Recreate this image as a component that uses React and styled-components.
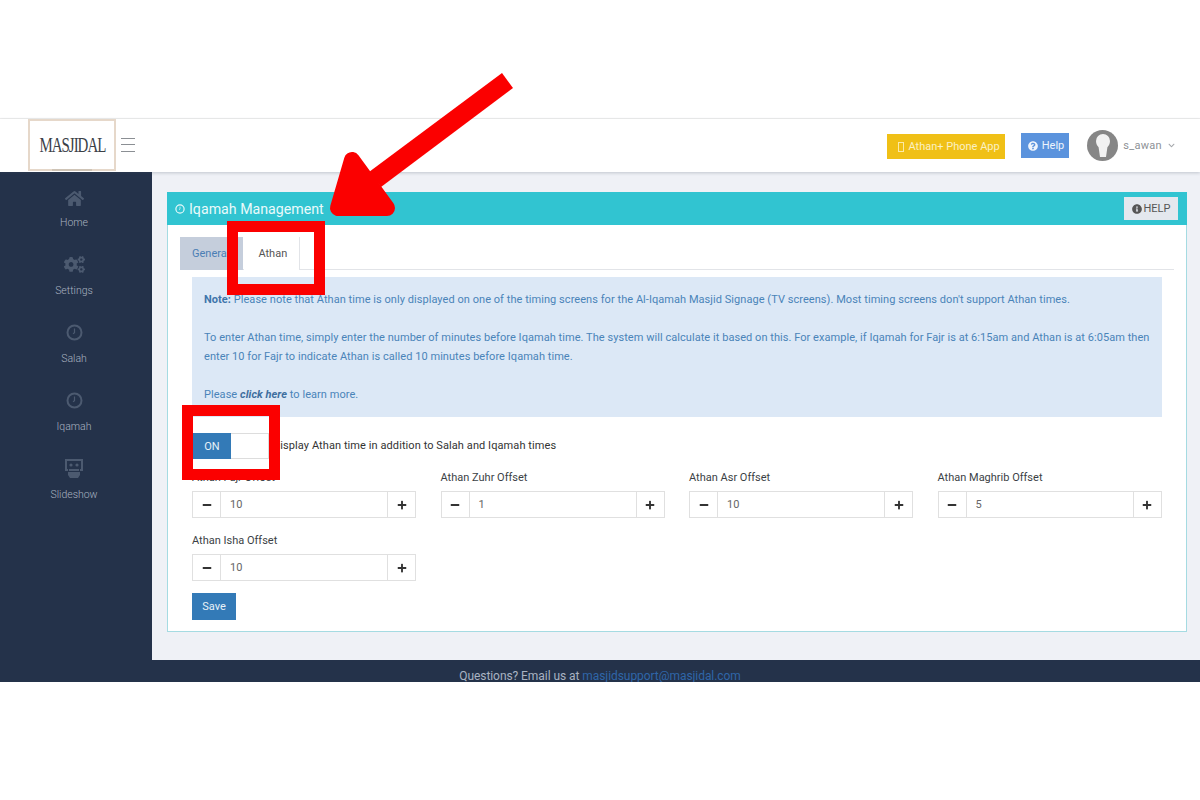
import styled, { createGlobalStyle } from "styled-components";
import { FaHome, FaCogs, FaMinus, FaPlus, FaInfoCircle, FaQuestionCircle, FaChevronDown } from "react-icons/fa";

const GlobalStyle = createGlobalStyle`
  html, body { margin: 0; padding: 0; background: #fff; }
  body { font-family: Roboto, "Liberation Sans", sans-serif; }
`;

const Page = styled.div`
  position: relative;
  width: 1200px;
  height: 800px;
  overflow: hidden;
  padding-top: 118px;
  box-sizing: border-box;
`;

const Frame = styled.div`
  height: 564px;
  display: flex;
  flex-direction: column;
  border-top: 1px solid #efefef;
  box-sizing: border-box;
`;

const Header = styled.header`
  height: 53px;
  flex: none;
  display: flex;
  align-items: center;
  padding: 0 25px 0 28px;
  background: #fff;
  position: relative;
  z-index: 1;
  box-shadow: 0 1px 3px rgba(60, 70, 90, 0.25);
`;

const Logo = styled.div`
  width: 88px;
  height: 52px;
  box-sizing: border-box;
  border: 2px solid #e6d8ca;
  display: flex;
  align-items: center;
  justify-content: center;
  position: relative;
  top: -1px;
  &::after {
    content: "";
    position: absolute;
    left: 22px;
    right: 22px;
    bottom: -2px;
    height: 2px;
    background: #cfc4b6;
  }
`;

const LogoText = styled.span`
  font-family: "Liberation Serif", serif;
  font-size: 22px;
  letter-spacing: -1.5px;
  color: #3a4047;
  transform: scaleX(0.68);
  white-space: nowrap;
`;

const Burger = styled.div`
  width: 14px;
  height: 12px;
  margin-left: 5px;
  margin-top: -1px;
  border-top: 1px solid #8b8f94;
  border-bottom: 1px solid #8b8f94;
  position: relative;
  &::after {
    content: "";
    position: absolute;
    left: 0;
    right: 0;
    top: 5px;
    border-top: 1px solid #8b8f94;
  }
`;

const HeaderRight = styled.div`
  margin-left: auto;
  display: flex;
  align-items: center;
`;

const TopButton = styled.div`
  height: 25px;
  box-sizing: border-box;
  display: flex;
  align-items: center;
  gap: 4px;
  padding: 0 5px 0 ${(p) => p.$left}px;
  margin-right: ${(p) => p.$right}px;
  margin-top: ${(p) => p.$drop}px;
  background: ${(p) => p.$bg};
  color: ${(p) => p.$fg};
  font-size: 11px;
  white-space: nowrap;
`;

const PhoneGlyph = styled.span`
  width: 4px;
  height: 8px;
  border: 1px solid #fbeaa8;
`;

const Avatar = styled.div`
  width: 31px;
  height: 31px;
  border-radius: 50%;
  background: #868686;
  display: flex;
  align-items: center;
  justify-content: center;
`;

const UserName = styled.span`
  margin-left: 5px;
  font-size: 11px;
  letter-spacing: 0.3px;
  color: #8d9196;
`;

const Caret = styled.span`
  margin-left: 6px;
  display: flex;
  color: #a5a8ac;
  font-size: 7px;
`;

const Main = styled.div`
  flex: 1;
  display: flex;
  min-height: 0;
`;

const Sidebar = styled.nav`
  width: 152px;
  flex: none;
  background: #24324a;
  padding: 12px 4px 0 0;
  box-sizing: border-box;
`;

const NavItem = styled.div`
  height: 68px;
  display: flex;
  flex-direction: column;
  align-items: center;
  color: #a9b2c0;
  font-size: 10.5px;
  font-weight: 300;
`;

const NavIcon = styled.div`
  height: 24px;
  margin-top: ${(p) => p.$drop || 0}px;
  margin-bottom: ${(p) => 8 - (p.$drop || 0)}px;
  display: flex;
  align-items: center;
  justify-content: center;
  color: #4c5a70;
  font-size: ${(p) => p.$size || 19}px;
`;

const Content = styled.main`
  flex: 1;
  background: #eff1f6;
  padding: 20px 13px 0 15px;
`;

const Panel = styled.section`
  height: 440px;
  box-sizing: border-box;
  background: #fff;
  border: 1px solid #a5dbe2;
`;

const PanelHead = styled.div`
  height: 33px;
  margin: -1px -1px 0;
  background: #31c4d1;
  display: flex;
  align-items: center;
  justify-content: space-between;
  padding: 0 9px 0 8px;
  color: #eafafb;
  font-size: 14.2px;
`;

const PanelTitle = styled.div`
  display: flex;
  align-items: center;
  gap: 4px;
`;

const HelpButton = styled.div`
  width: 54px;
  height: 23px;
  display: flex;
  align-items: center;
  justify-content: center;
  gap: 2px;
  background: #e4e8ee;
  color: #555;
  font-size: 11px;
`;

const Tabs = styled.div`
  margin: 12px 12px 0;
  height: 33px;
  box-sizing: border-box;
  display: flex;
  border-bottom: 1px solid #e2e4e8;
`;

const Tab = styled.div`
  height: 33px;
  flex: none;
  box-sizing: border-box;
  display: flex;
  align-items: center;
  padding: 0 ${(p) => (p.$active ? "12px" : "13px")} 0 ${(p) => (p.$active ? "14px" : "12px")};
  font-size: 11px;
  color: ${(p) => (p.$active ? "#555" : "#4b7fb5")};
  background: ${(p) => (p.$active ? "#fff" : "#c5cedc")};
  border-right: 1px solid ${(p) => (p.$active ? "#e2e4e8" : "transparent")};
  margin-right: 1px;
`;

const TabBody = styled.div`
  padding: 7px 24px 0;
`;

const Note = styled.div`
  height: 140px;
  box-sizing: border-box;
  padding: 13px 12px 0;
  background: #dce8f6;
  color: #4a84b9;
  font-size: 11px;
  line-height: 19px;
  letter-spacing: 0.05px;
  p { margin: 0 0 19px; }
  strong { font-weight: 700; color: #3f75ab; }
  em { font-style: italic; font-weight: 700; color: #3f6f9f; }
`;

const ToggleRow = styled.div`
  margin-top: 16px;
  display: flex;
  align-items: center;
  gap: 4px;
  color: #333;
  font-size: 11px;
  letter-spacing: 0.08px;
`;

const ToggleLabel = styled.span`
  margin-top: -2px;
`;

const Toggle = styled.div`
  width: 76px;
  height: 26px;
  margin-left: 1px;
  box-sizing: border-box;
  border: 1px solid #ddd;
  border-left: 0;
  background: #fff;
  display: flex;
  position: relative;
`;

const ToggleOn = styled.div`
  width: 38px;
  margin: -1px 0;
  background: #337ab7;
  color: #e8f1f8;
  display: flex;
  align-items: center;
  justify-content: center;
  font-size: 11px;
`;

const FieldGrid = styled.div`
  margin-top: 12px;
  display: grid;
  grid-template-columns: repeat(4, 224px);
  column-gap: 24.5px;
  row-gap: 16px;
`;

const Field = styled.div`
  color: #3b3f45;
  font-size: 11px;
`;

const FieldLabel = styled.div`
  height: 14px;
  line-height: 14px;
  margin-bottom: 6px;
`;

const Stepper = styled.div`
  height: 27px;
  box-sizing: border-box;
  display: flex;
  border: 1px solid #e0e0e0;
`;

const StepButton = styled.div`
  width: 27px;
  flex: none;
  display: flex;
  align-items: center;
  justify-content: center;
  color: #333;
  font-size: 10px;
`;

const StepValue = styled.div`
  flex: 1;
  display: flex;
  align-items: center;
  padding-left: 9px;
  border-left: 1px solid #e0e0e0;
  border-right: 1px solid #e0e0e0;
  color: #666;
  font-size: 11px;
`;

const SaveButton = styled.div`
  width: 44px;
  height: 27px;
  margin-top: 12px;
  display: flex;
  align-items: center;
  justify-content: center;
  background: #337ab7;
  color: #e8f1f8;
  font-size: 11px;
`;

const Footer = styled.footer`
  height: 22px;
  flex: none;
  overflow: hidden;
  background: #24324a;
  color: #a9b3c2;
  font-size: 12px;
  line-height: 14px;
  padding-top: 9px;
  box-sizing: border-box;
  text-align: center;
  letter-spacing: -0.06px;
  a { color: #2f66a8; }
`;

const Highlight = styled.div`
  position: absolute;
  z-index: 2;
  left: ${(p) => p.$x}px;
  top: ${(p) => p.$y}px;
  width: ${(p) => p.$w}px;
  height: ${(p) => p.$h}px;
  box-sizing: border-box;
  border: 11px solid #fb0000;
  pointer-events: none;
`;

const ArrowLayer = styled.svg`
  position: absolute;
  z-index: 2;
  left: 0;
  top: 0;
  pointer-events: none;
`;

function ClockIcon({ size = 17, color = "#4c5a70", weight = 2 }) {
  return (
    <svg width={size} height={size} viewBox="0 0 17 17" fill="none" stroke={color} strokeWidth={weight}>
      <circle cx="8.5" cy="8.5" r="7" />
      <path d="M8.5 4.5v4.2l-1.500 1" strokeWidth="1.2" />
    </svg>
  );
}

function SlideshowIcon() {
  return (
    <svg width="18" height="20" viewBox="0 0 18 20" fill="#4c5a70">
      <path d="M0 1h18v12h-3v-2h1V3H2v8h1v2H0z" />
      <circle cx="6" cy="7" r="1.6" />
      <circle cx="12" cy="7" r="1.6" />
      <path d="M4 11h10v2H4zM3 14h12v3l-2 3H5l-2-3z" />
    </svg>
  );
}

function KeyholeHead() {
  return (
    <svg width="14" height="23" viewBox="0 0 14 23" fill="#f2f2f2">
      <path d="M7 0a7 7 0 0 1 7 7c0 3-1.300 4.600-2.600 6.300L10 23H4l-1.400-9.700C1.300 11.600 0 10 0 7a7 7 0 0 1 7-7z" />
    </svg>
  );
}

const navItems = [
  { label: "Home", icon: <FaHome />, drop: 2 },
  { label: "Settings", icon: <FaCogs />, size: 21 },
  { label: "Salah", icon: <ClockIcon /> },
  { label: "Iqamah", icon: <ClockIcon /> },
  { label: "Slideshow", icon: <SlideshowIcon /> },
];

const offsets = [
  { name: "Athan Fajr Offset", value: 10 },
  { name: "Athan Zuhr Offset", value: 1 },
  { name: "Athan Asr Offset", value: 10 },
  { name: "Athan Maghrib Offset", value: 5 },
  { name: "Athan Isha Offset", value: 10 },
];

function App() {
  return (
    <Page>
      <GlobalStyle />
      <Frame>
        <Header>
          <Logo>
            <LogoText>MASJIDAL</LogoText>
          </Logo>
          <Burger />
          <HeaderRight>
            <TopButton $bg="#f0c016" $fg="#fbf1c4" $left={11} $right={16} $drop={2}>
              <PhoneGlyph />
              Athan+ Phone App
            </TopButton>
            <TopButton $bg="#5b93dd" $fg="#eef4fc" $left={7} $right={18} $drop={0}>
              <FaQuestionCircle size={10} />
              Help
            </TopButton>
            <Avatar>
              <KeyholeHead />
            </Avatar>
            <UserName>s_awan</UserName>
            <Caret>
              <FaChevronDown />
            </Caret>
          </HeaderRight>
        </Header>
        <Main>
          <Sidebar>
            {navItems.map((item) => (
              <NavItem key={item.label}>
                <NavIcon $drop={item.drop} $size={item.size}>{item.icon}</NavIcon>
                {item.label}
              </NavItem>
            ))}
          </Sidebar>
          <Content>
            <Panel>
              <PanelHead>
                <PanelTitle>
                  <ClockIcon size={10} color="#eafafb" weight={2} />
                  Iqamah Management
                </PanelTitle>
                <HelpButton>
                  <FaInfoCircle size={10} />
                  HELP
                </HelpButton>
              </PanelHead>
              <Tabs>
                <Tab>General</Tab>
                <Tab $active>Athan</Tab>
              </Tabs>
              <TabBody>
                <Note>
                  <p>
                    <strong>Note:</strong> Please note that Athan time is only displayed on one of the timing screens for the Al-Iqamah Masjid Signage (TV screens). Most timing screens don't support Athan times.
                  </p>
                  <p>
                    To enter Athan time, simply enter the number of minutes before Iqamah time. The system will calculate it based on this. For example, if Iqamah for Fajr is at 6:15am and Athan is at 6:05am then enter 10 for Fajr to indicate Athan is called 10 minutes before Iqamah time.
                  </p>
                  <p>
                    Please <em>click here</em> to learn more.
                  </p>
                </Note>
                <ToggleRow>
                  <Toggle>
                    <ToggleOn>ON</ToggleOn>
                  </Toggle>
                  <ToggleLabel>Display Athan time in addition to Salah and Iqamah times</ToggleLabel>
                </ToggleRow>
                <FieldGrid>
                  {offsets.map((field) => (
                    <Field key={field.name}>
                      <FieldLabel>{field.name}</FieldLabel>
                      <Stepper>
                        <StepButton>
                          <FaMinus />
                        </StepButton>
                        <StepValue>{field.value}</StepValue>
                        <StepButton>
                          <FaPlus />
                        </StepButton>
                      </Stepper>
                    </Field>
                  ))}
                </FieldGrid>
                <SaveButton>Save</SaveButton>
              </TabBody>
            </Panel>
          </Content>
        </Main>
        <Footer>
          Questions? Email us at <a>masjidsupport@masjidal.com</a>
        </Footer>
      </Frame>
      <Highlight $x={227} $y={221} $w={98} $h={74} />
      <Highlight $x={182} $y={405} $w={98} $h={75} />
      <ArrowLayer width="1200" height="800" viewBox="0 0 1200 800">
        <path
          d="M352 160 L338 208 L387 208 Z"
          fill="#fb0000"
          stroke="#fb0000"
          strokeWidth="16"
          strokeLinejoin="round"
        />
        <path d="M369 172 L502 73 L513 88 L381 187 Z" fill="#fb0000" />
      </ArrowLayer>
    </Page>
  );
}

export default App;
